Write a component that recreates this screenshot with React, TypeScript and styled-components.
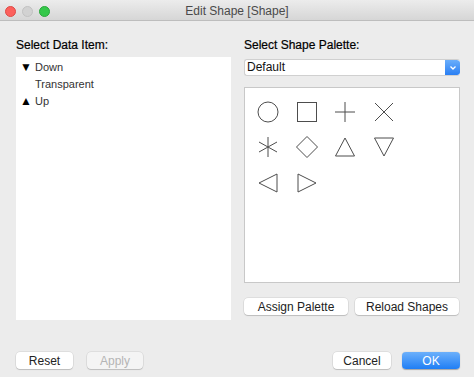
import React from "react";
import styled, { createGlobalStyle } from "styled-components";

const GlobalStyle = createGlobalStyle`
  html, body {
    margin: 0;
    padding: 0;
    background: #ececec;
  }
  body {
    font-family: "Lucida Grande", "Liberation Sans", Arial, sans-serif;
  }
`;

const Window = styled.div`
  width: 474px;
  height: 377px;
  display: flex;
  flex-direction: column;
  background: #ececec;
  overflow: hidden;
  color: #222;
  font-size: 12px;
`;

const TitleBar = styled.div`
  height: 21px;
  flex: none;
  position: relative;
  display: flex;
  align-items: center;
  justify-content: center;
  background: linear-gradient(#ececec, #d6d6d6);
  border-bottom: 1px solid #bdbdbd;
  box-sizing: border-box;
`;

const Lights = styled.div`
  position: absolute;
  left: 5px;
  top: 6px;
  display: flex;
  gap: 6px;
`;

const Light = styled.span<{ $c: string; $b: string }>`
  width: 11px;
  height: 11px;
  border-radius: 50%;
  background: ${(p) => p.$c};
  border: 0.5px solid ${(p) => p.$b};
  box-sizing: border-box;
`;

const Title = styled.div`
  font-size: 12px;
  color: #4a4a4a;
  padding-top: 1px;
`;

const Body = styled.div`
  display: grid;
  grid-template-columns: 215px 216px;
  column-gap: 13px;
  padding: 14px 14px 0 16px;
`;

const Column = styled.div`
  display: flex;
  flex-direction: column;
`;

const Label = styled.div`
  line-height: 20px;
  height: 20px;
  font-size: 12px;
  color: #000;
  -webkit-text-stroke: 0.2px #000;
`;

const ListBox = styled.div`
  margin-top: 2px;
  height: 263px;
  background: #fff;
  padding-top: 1px;
  box-sizing: border-box;
`;

const ListItem = styled.div`
  height: 17px;
  display: flex;
  align-items: center;
  font-size: 11px;
  color: #333;
`;

const Arrow = styled.span`
  width: 19px;
  padding-left: 4px;
  box-sizing: border-box;
  font-size: 12px;
  line-height: 12px;
  color: #000;
`;

const Select = styled.div`
  margin-top: 4px;
  height: 17px;
  display: flex;
  background: #fff;
  border: 1px solid #d0d0d0;
  border-right: none;
  border-radius: 3px;
  box-sizing: border-box;
  overflow: hidden;
`;

const SelectText = styled.div`
  flex: 1;
  padding-left: 2px;
  line-height: 15px;
  font-size: 12px;
  color: #111;
`;

const SelectButton = styled.div`
  width: 15px;
  background: linear-gradient(#6aaefb, #2a7ff3);
  display: flex;
  align-items: center;
  justify-content: center;
  border-radius: 0 3px 3px 0;
`;

const ShapeBox = styled.div`
  margin-top: 11px;
  height: 196px;
  background: #fff;
  border: 1px solid #c8c8c8;
  box-sizing: border-box;
  padding: 6px 0 0 4px;
  display: grid;
  grid-template-columns: repeat(4, 38.5px);
  grid-auto-rows: 35.5px;
  align-content: start;
`;

const ShapeCell = styled.div`
  display: flex;
  align-items: center;
  justify-content: center;
`;

const ButtonRow = styled.div`
  margin-top: 15px;
  display: flex;
  gap: 7px;
`;

const Button = styled.div<{ $w: number; $primary?: boolean; $disabled?: boolean }>`
  width: ${(p) => p.$w}px;
  height: 17px;
  border-radius: 4px;
  display: flex;
  align-items: center;
  justify-content: center;
  font-size: 12px;
  box-sizing: border-box;
  background: ${(p) =>
    p.$primary ? "linear-gradient(#6cb0fb, #1f7ef5)" : p.$disabled ? "#f4f4f4" : "#fff"};
  color: ${(p) => (p.$primary ? "#fff" : p.$disabled ? "#b5b5b5" : "#222")};
  box-shadow: ${(p) =>
    p.$primary ? "0 0.5px 1px rgba(0,0,0,0.3)" : "0 0 0 0.5px rgba(0,0,0,0.12), 0 1px 1px rgba(0,0,0,0.15)"};
`;

const Footer = styled.div`
  margin-top: 32px;
  padding: 0 14px 0 16px;
  display: flex;
  align-items: center;
`;

const Spacer = styled.div`
  flex: 1;
`;

const stroke = { fill: "none", stroke: "#4d4d4d", strokeWidth: 1 };

const shapes: React.ReactNode[] = [
  <circle cx="12" cy="12" r="10" {...stroke} />,
  <rect x="2.5" y="2.5" width="19" height="19" {...stroke} />,
  <path d="M12 2V22M2 12H22" {...stroke} />,
  <path d="M3 3L21 21M21 3L3 21" {...stroke} />,
  <path d="M12 2V22M3 7L21 17M21 7L3 17" {...stroke} />,
  <path d="M12 1.5L22.5 12L12 22.5L1.5 12Z" {...stroke} />,
  <path d="M12 3L21.5 21H2.5Z" {...stroke} />,
  <path d="M2.5 3H21.5L12 21Z" {...stroke} />,
  <path d="M21 3V21L3 12Z" {...stroke} />,
  <path d="M3 3V21L21 12Z" {...stroke} />,
];

export default function App() {
  return (
    <Window>
      <GlobalStyle />
      <TitleBar>
        <Lights>
          <Light $c="#fc605c" $b="#de4a45" />
          <Light $c="#d2d2d2" $b="#c2c2c2" />
          <Light $c="#35c84a" $b="#2aa83c" />
        </Lights>
        <Title>Edit Shape [Shape]</Title>
      </TitleBar>
      <Body>
        <Column>
          <Label>Select Data Item:</Label>
          <ListBox>
            <ListItem>
              <Arrow>▼</Arrow>Down
            </ListItem>
            <ListItem>
              <Arrow />Transparent
            </ListItem>
            <ListItem>
              <Arrow>▲</Arrow>Up
            </ListItem>
          </ListBox>
        </Column>
        <Column>
          <Label>Select Shape Palette:</Label>
          <Select>
            <SelectText>Default</SelectText>
            <SelectButton>
              <svg width="8" height="6" viewBox="0 0 8 6">
                <path d="M1.5 1.5L4 4L6.5 1.5" fill="none" stroke="#fff" strokeWidth="1.3" />
              </svg>
            </SelectButton>
          </Select>
          <ShapeBox>
            {shapes.map((s, i) => (
              <ShapeCell key={i}>
                <svg width="24" height="24" viewBox="0 0 24 24">
                  {s}
                </svg>
              </ShapeCell>
            ))}
          </ShapeBox>
          <ButtonRow>
            <Button $w={104}>Assign Palette</Button>
            <Button $w={104}>Reload Shapes</Button>
          </ButtonRow>
        </Column>
      </Body>
      <Footer>
        <Button $w={57}>Reset</Button>
        <Button $w={56} $disabled style={{ marginLeft: 14 }}>
          Apply
        </Button>
        <Spacer />
        <Button $w={58}>Cancel</Button>
        <Button $w={58} $primary style={{ marginLeft: 11 }}>
          OK
        </Button>
      </Footer>
    </Window>
  );
}
